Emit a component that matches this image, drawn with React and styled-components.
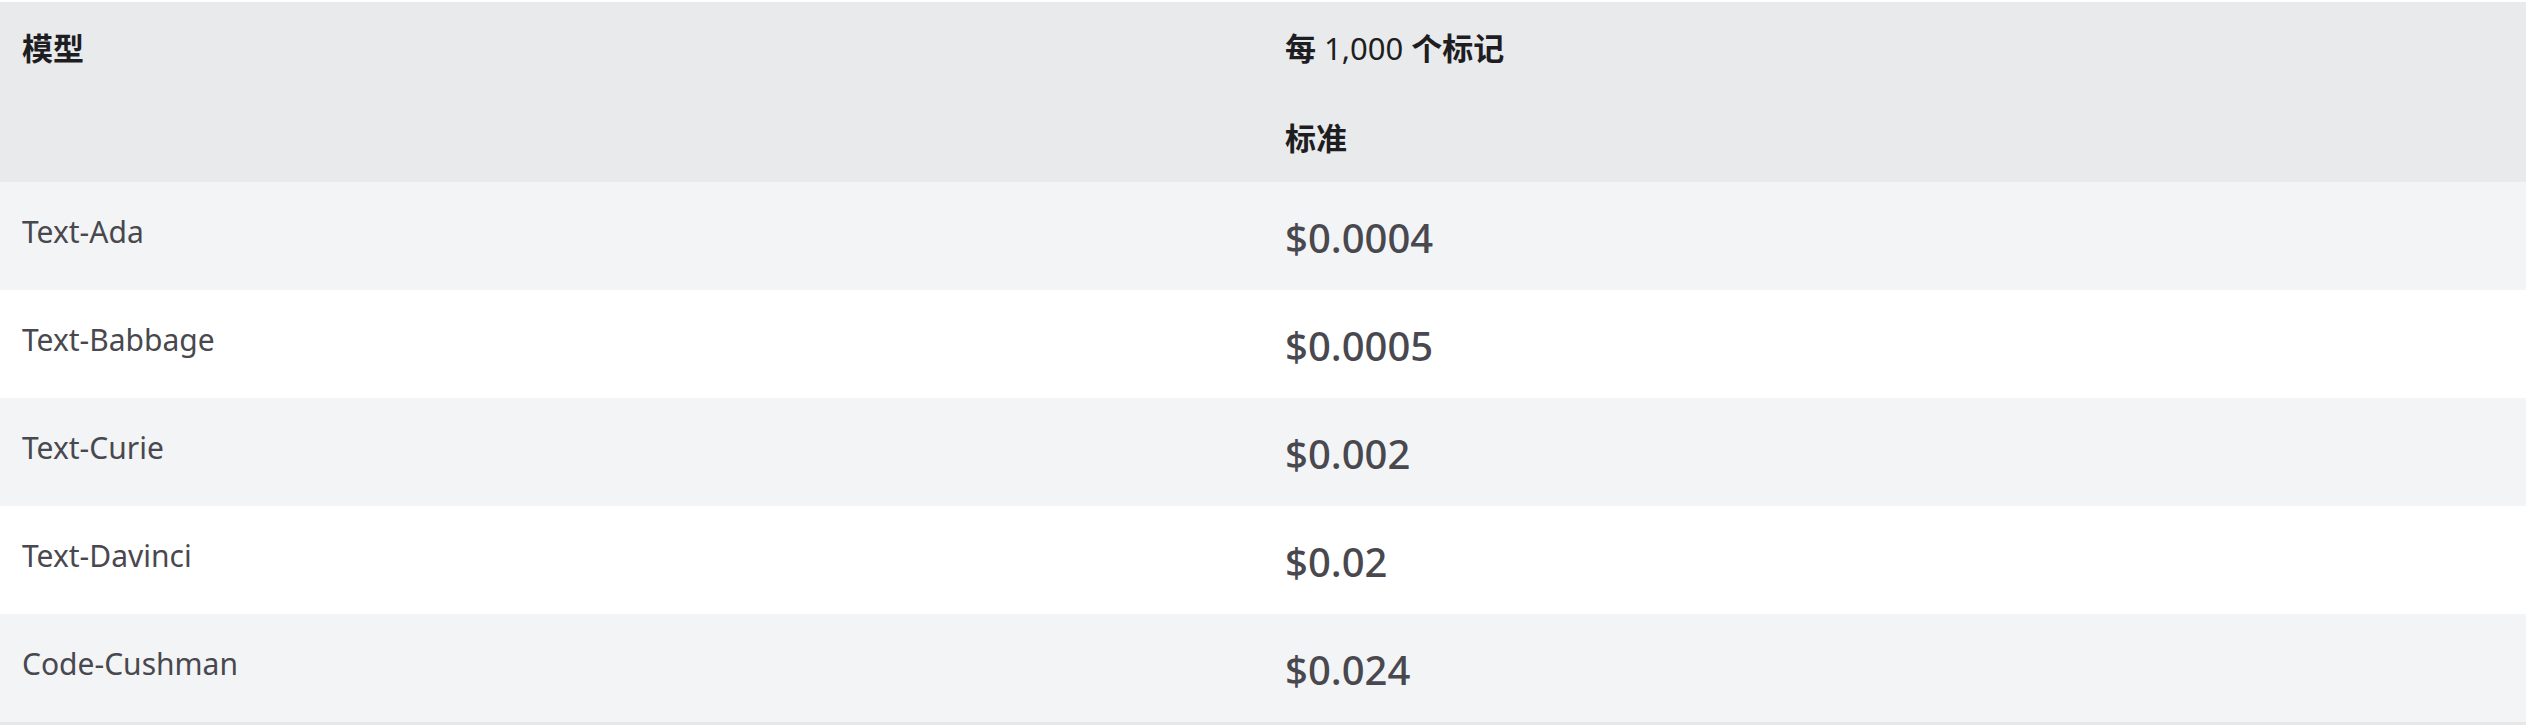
import React from 'react';
import styled, { createGlobalStyle } from 'styled-components';

const GlobalStyle = createGlobalStyle`
  body {
    margin: 0;
    padding-top: 2px;
    background: #ffffff;
    font-family: "Noto Sans", "Noto Sans CJK SC", sans-serif;
  }
`;

const Table = styled.div`
  width: 100%;
  border-bottom: 3px solid #e6e7e9;
`;

const Head = styled.div`
  background: #e9eaec;
  color: #1e1e22;
  font-weight: 700;
  font-size: 31px;
`;

const HeadRow = styled.div`
  display: grid;
  grid-template-columns: 1fr 1fr;
  height: ${props => props.height}px;
  align-items: center;
`;

const HeadCell = styled.div`
  padding: 0 22px;
  line-height: 48px;
`;

const Num = styled.span`
  font-weight: 400;
`;

const Row = styled.div`
  display: grid;
  grid-template-columns: 1fr 1fr;
  height: 108px;
  background: ${props => props.striped ? '#f3f4f6' : '#ffffff'};
  color: #48484e;
`;

const Model = styled.div`
  padding: 20px 22px 0;
  font-size: 30px;
  line-height: 60px;
`;

const Price = styled.div`
  padding: 20px 22px 0;
  font-size: 40px;
  font-weight: 500;
  line-height: 72px;
`;

const rows = [
  ['Text-Ada', '$0.0004'],
  ['Text-Babbage', '$0.0005'],
  ['Text-Curie', '$0.002'],
  ['Text-Davinci', '$0.02'],
  ['Code-Cushman', '$0.024'],
];

export default function App() {
  return (
    <>
      <GlobalStyle />
      <Table>
        <Head>
          <HeadRow height={92}>
            <HeadCell>模型</HeadCell>
            <HeadCell>每 <Num>1,000</Num> 个标记</HeadCell>
          </HeadRow>
          <HeadRow height={88}>
            <HeadCell />
            <HeadCell>标准</HeadCell>
          </HeadRow>
        </Head>
        {rows.map(([model, price], i) => (
          <Row key={model} striped={i % 2 === 0}>
            <Model>{model}</Model>
            <Price>{price}</Price>
          </Row>
        ))}
      </Table>
    </>
  );
}
